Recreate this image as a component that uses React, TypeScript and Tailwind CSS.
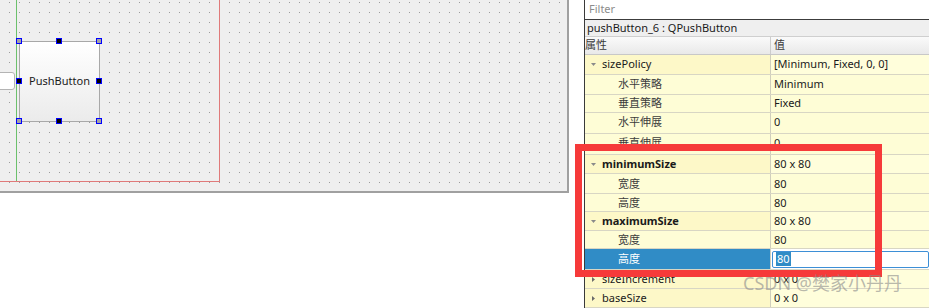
import React from 'react'

const font = { fontFamily: '"Noto Sans", "Noto Sans CJK SC", sans-serif' }

type Row = {
  name: string
  value: string
  level: 0 | 1
  arrow?: 'down' | 'right'
  bold?: boolean
  h: string
  selected?: boolean
}

const rows: Row[] = [
  { name: 'sizePolicy', value: '[Minimum, Fixed, 0, 0]', level: 0, arrow: 'down', h: 'h-[20px]' },
  { name: '水平策略', value: 'Minimum', level: 1, h: 'h-[20px]' },
  { name: '垂直策略', value: 'Fixed', level: 1, h: 'h-[18px]' },
  { name: '水平伸展', value: '0', level: 1, h: 'h-[21px]' },
  { name: '垂直伸展', value: '0', level: 1, h: 'h-[21px]' },
  { name: 'minimumSize', value: '80 x 80', level: 0, arrow: 'down', bold: true, h: 'h-[20px]' },
  { name: '宽度', value: '80', level: 1, h: 'h-[20px]' },
  { name: '高度', value: '80', level: 1, h: 'h-[18px]' },
  { name: 'maximumSize', value: '80 x 80', level: 0, arrow: 'down', bold: true, h: 'h-[19px]' },
  { name: '宽度', value: '80', level: 1, h: 'h-[18px]' },
  { name: '高度', value: '80', level: 1, h: 'h-[21px]', selected: true },
  { name: 'sizeIncrement', value: '0 x 0', level: 0, arrow: 'right', h: 'h-[19px]' },
  { name: 'baseSize', value: '0 x 0', level: 0, arrow: 'right', h: 'h-[19px]' },
]

function Arrow({ dir }: { dir: 'down' | 'right' }) {
  return (
    <svg width="7" height="7" viewBox="0 0 7 7" className="shrink-0">
      {dir === 'down' ? (
        <path d="M1 2 L6 2 L3.5 5 Z" fill="#8a8a8a" />
      ) : (
        <path d="M2 1 L5 3.5 L2 6 Z" fill="#6a6a6a" />
      )}
    </svg>
  )
}

function Handle({ x, y, mid }: { x: number; y: number; mid?: boolean }) {
  return (
    <div
      className={`absolute w-[6px] h-[6px] border border-[#0000ff] ${mid ? 'bg-black' : 'bg-[#a4a4a4]'}`}
      style={{ left: x - 3, top: y - 3 }}
    />
  )
}

function Canvas() {
  return (
    <div className="relative w-[569px] h-[193px] bg-[#efefef] border-r-2 border-b-2 border-[#a0a0a0] overflow-hidden">
      {/* dot grid */}
      <svg className="absolute inset-0" width="569" height="193">
        <defs>
          <pattern id="dots" x="9" y="2" width="10" height="10" patternUnits="userSpaceOnUse">
            <rect width="1" height="1" fill="#9c9c9c" />
          </pattern>
        </defs>
        <rect width="569" height="193" fill="url(#dots)" />
      </svg>

      {/* form border */}
      <div className="absolute left-0 top-0 w-[220px] h-[182px] border-r border-b border-[#e07a7a]" />
      {/* layout guide */}
      <div className="absolute left-[16px] top-0 w-px h-[181px] bg-[#6cc06c]" />

      {/* neighbour button */}
      <div className="absolute left-[-10px] top-[72px] w-[25px] h-[18px] bg-white border border-[#b4b4b4] rounded-[3px]" />

      {/* selected button */}
      <div className="absolute left-[19px] top-[41px] w-[81px] h-[81px] border border-[#a8a8a8] bg-gradient-to-b from-white to-[#ebebeb] flex items-center justify-center">
        <span className="text-[11px] text-[#1a1a1a]">PushButton</span>
      </div>
      <Handle x={19} y={41} />
      <Handle x={59} y={41} mid />
      <Handle x={99} y={41} />
      <Handle x={19} y={81} mid />
      <Handle x={99} y={81} mid />
      <Handle x={19} y={121} />
      <Handle x={59} y={121} mid />
      <Handle x={99} y={121} />
    </div>
  )
}

function PropertyPanel() {
  return (
    <div className="flex-1 flex flex-col border-l-[1.5px] border-[#3a3a3a] bg-white text-[11px] text-[#1a1a1a]">
      {/* filter */}
      <div className="h-[20px] border-b border-[#3c3c3c] flex items-center pl-[4px] text-[#8c8c8c]">Filter</div>

      {/* object name */}
      <div className="h-[17px] bg-[#efefef] border-b border-[#cfcfcf] flex items-center pl-[2px]">
        pushButton_6 : QPushButton
      </div>

      {/* header */}
      <div className="h-[18px] flex bg-gradient-to-b from-[#fafafa] to-[#e9e9e9] border-b border-[#c8c8c8]">
        <div className="w-[186px] border-r border-[#cdcdcd] flex items-center text-[#3a3a3a]">属性</div>
        <div className="flex-1 flex items-center pl-[3px] text-[#3a3a3a]">值</div>
      </div>

      {rows.map((r, i) => (
        <div
          key={i}
          className={`${r.h} flex border-b border-[#d8d6c4] ${
            r.selected ? 'bg-[#308cc6]' : r.level === 0 ? 'bg-[#fdf8c8]' : 'bg-[#fefdd6]'
          }`}
        >
          <div
            className={`w-[186px] shrink-0 border-r border-[#d0cebc] flex items-center gap-[5px] ${
              r.level === 0 ? 'pl-[5px]' : 'pl-[33px]'
            } ${r.selected ? 'text-white' : r.level === 1 ? 'text-[#3c3c3c]' : ''} ${r.bold ? 'font-bold' : ''}`}
          >
            {r.arrow && <Arrow dir={r.arrow} />}
            <span>{r.name}</span>
          </div>
          {r.selected ? (
            <div className="flex-1 bg-white flex items-center">
              <div className="ml-[1px] h-[17px] flex-1 border border-[#3d8fd6] rounded-[2px] bg-white flex items-center pl-[3px]">
                <span className="bg-[#308cc6] text-white leading-[14px] px-[1px]">80</span>
              </div>
            </div>
          ) : (
            <div className={`flex-1 flex items-center pl-[3px] ${r.level === 0 ? 'bg-[#fffedb]' : ''}`}>{r.value}</div>
          )}
        </div>
      ))}
    </div>
  )
}

export default function App() {
  return (
    <div className="relative w-[929px] h-[308px] overflow-hidden bg-white flex" style={font}>
      <div className="w-[584px] shrink-0 bg-white">
        <Canvas />
      </div>
      <PropertyPanel />

      {/* annotation box */}
      <div className="absolute left-[575px] top-[144px] w-[307px] h-[133px] border-[7px] border-[#f63a3a]" />

      {/* watermark */}
      <div className="absolute left-[743px] top-[270px] text-[18px] leading-[26px] text-[#8a8a8a]/60 whitespace-nowrap">
        CSDN @樊家小丹丹
      </div>
    </div>
  )
}
